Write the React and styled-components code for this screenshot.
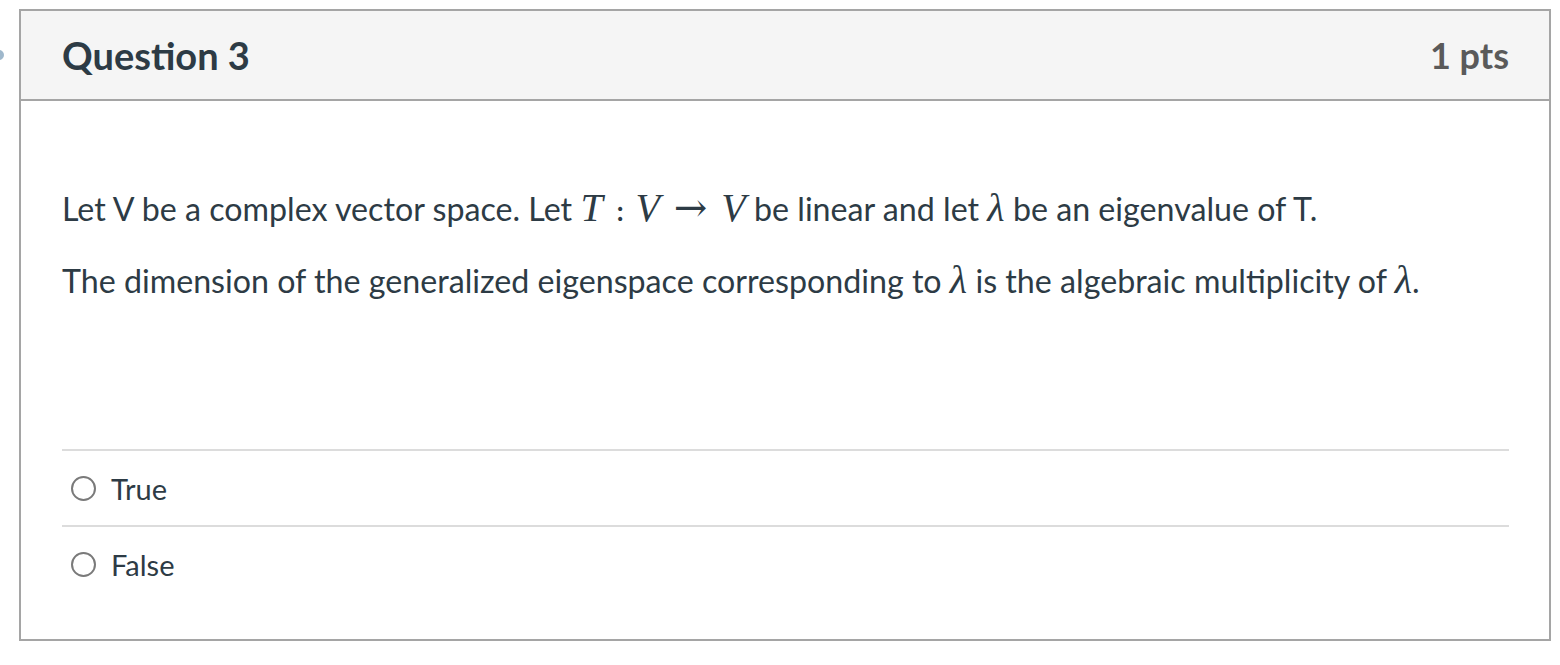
import React from 'react'
import styled, { createGlobalStyle } from 'styled-components'

const GlobalStyle = createGlobalStyle`
  html, body {
    margin: 0;
    padding: 0;
    background: #ffffff;
  }
  body {
    font-family: Lato, "Liberation Sans", sans-serif;
    color: #2d3b45;
  }
`;

const Page = styled.div`
  position: relative;
  width: 1560px;
  height: 665px;
  padding: 9px 0 0 19px;
  box-sizing: border-box;
`;

const EdgeMarker = styled.span`
  position: absolute;
  left: -6px;
  top: 50px;
  width: 10px;
  height: 10px;
  border-radius: 50%;
  background: #9fb8cc;
`;

const Card = styled.div`
  width: 1532px;
  height: 632px;
  box-sizing: border-box;
  border: 2px solid #a5a5a5;
  display: flex;
  flex-direction: column;
`;

const Header = styled.div`
  height: 90px;
  box-sizing: border-box;
  background: #f5f5f5;
  border-bottom: 2px solid #a5a5a5;
  display: flex;
  align-items: center;
  justify-content: space-between;
  padding: 0 40px 0 41px;
`;

const Title = styled.h2`
  margin: 0;
  font-size: 38px;
  font-weight: 700;
  color: #2d3b45;
`;

const Points = styled.div`
  font-size: 36px;
  font-weight: 700;
  color: #5a5a5a;
`;

const Body = styled.div`
  padding: 86px 40px 0 41px;
`;

const Text = styled.p`
  margin: 0 0 28px 0;
  font-size: 32.2px;
  line-height: 44px;
  color: #2d3b45;
`;

const Math = styled.span`
  font-family: "Liberation Serif", "DejaVu Serif", serif;
  font-style: italic;
  font-size: 40px;
  line-height: 1;
`;

const Op = styled.span`
  font-family: "DejaVu Serif", "Liberation Serif", serif;
  font-size: ${({ $size }) => $size || 32}px;
  line-height: 1;
  margin: 0 ${({ $right }) => $right}px 0 ${({ $left }) => $left}px;
`;

const Answers = styled.div`
  margin-top: 146px;
`;

const Answer = styled.label`
  height: 76px;
  box-sizing: border-box;
  border-top: 2px solid #dcdcdc;
  display: flex;
  align-items: center;
  gap: 15px;
  padding-left: 9px;
  font-size: 29px;
  color: #2d3b45;
`;

const Radio = styled.span`
  width: 25px;
  height: 25px;
  box-sizing: border-box;
  border-radius: 50%;
  border: 2px solid #7a7a7a;
  background: #fff;
  flex: none;
`;

const Lambda = () => <Math>λ</Math>

const App = () =>
  <>
    <GlobalStyle />
    <Page>
      <EdgeMarker />
      <Card>
        <Header>
          <Title>Question 3</Title>
          <Points>1 pts</Points>
        </Header>

        <Body>
          <Text>
            Let V be a complex vector space. Let <Math>T</Math>
            <Op $left={12} $right={10}>:</Op><Math>V</Math>
            <Op $left={14} $right={14} $size={40}>→</Op><Math>V</Math> be linear and let <Lambda /> be an eigenvalue of T.
          </Text>
          <Text>
            The dimension of the generalized eigenspace corresponding to <Lambda /> is the algebraic multiplicity of <Lambda />.
          </Text>

          <Answers>
            {['True', 'False'].map( answer =>
              <Answer key={ answer }>
                <Radio />
                { answer }
              </Answer>
            )}
          </Answers>
        </Body>
      </Card>
    </Page>
  </>

export default App
